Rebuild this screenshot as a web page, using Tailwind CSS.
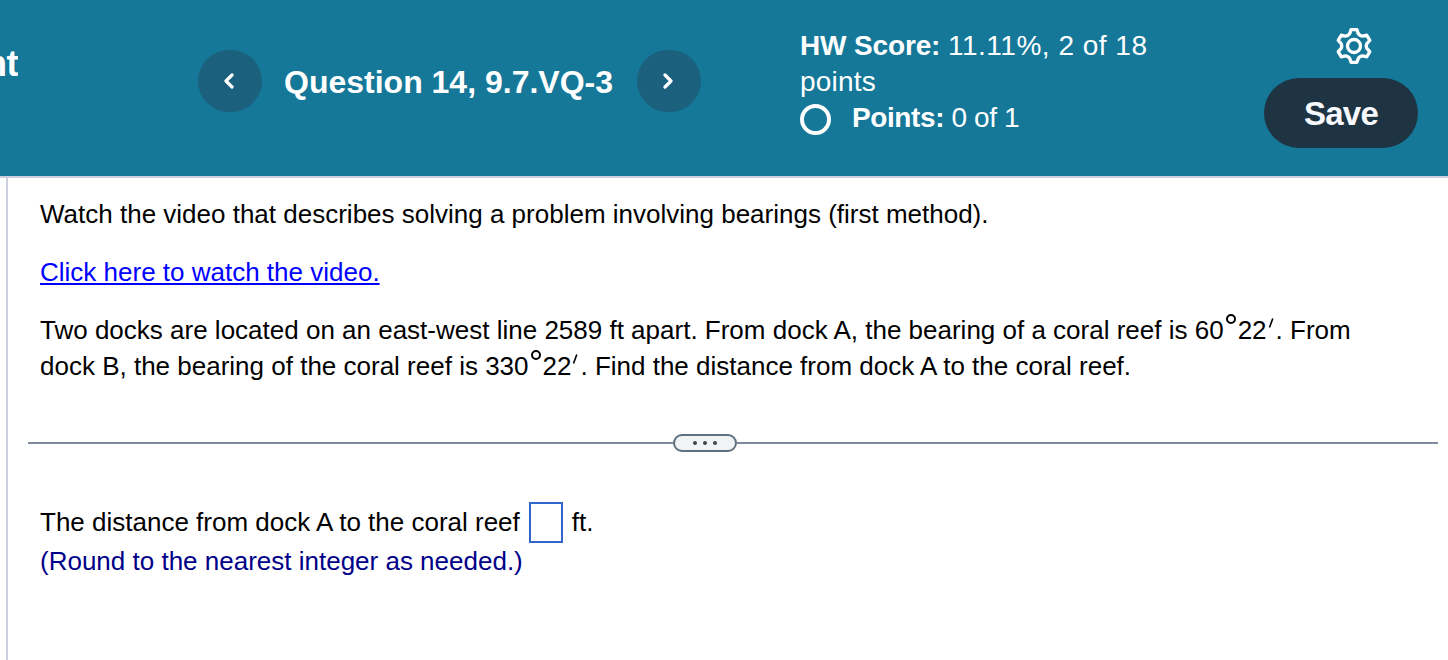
<!DOCTYPE html>
<html lang="en">
<head>
    <meta charset="UTF-8">
    <meta name="viewport" content="width=device-width, initial-scale=1.0">
    <title>Question 14, 9.7.VQ-3</title>
    <script src="https://cdn.jsdelivr.net/npm/@tailwindcss/browser@4"></script>
</head>
<body class="bg-white text-black font-['Liberation_Sans',Arial,sans-serif] h-[660px] flex flex-col overflow-hidden">
    <header class="flex items-start h-[178px] shrink-0 bg-[#157899] border-b-2 border-[#cccfde] text-white whitespace-nowrap">
        <div class="w-[198px] shrink-0 pt-[44px] overflow-hidden">
            <div class="w-[18px] flex justify-end overflow-hidden text-[36px] leading-[40px] font-bold tracking-[-0.5px]">nt</div>
        </div>

        <nav class="w-[602px] shrink-0 pt-[50px] flex items-center">
            <button class="w-[64px] h-[62px] rounded-full bg-[#1b607c] flex items-center justify-center pr-[2px]" aria-label="Previous question">
                <svg class="w-[10px] h-[16px]" viewBox="0 0 10 16" fill="none" stroke="white" stroke-width="3.2" stroke-linecap="round" stroke-linejoin="round"><path d="M8 2 2 8l6 6"/></svg>
            </button>
            <h1 class="w-[375px] pl-[22px] pt-px text-[32px] leading-[40px] font-bold">Question 14, 9.7.VQ-3</h1>
            <button class="w-[64px] h-[62px] rounded-full bg-[#1b607c] flex items-center justify-center pr-[2px]" aria-label="Next question">
                <svg class="w-[10px] h-[16px]" viewBox="0 0 10 16" fill="none" stroke="white" stroke-width="3.2" stroke-linecap="round" stroke-linejoin="round"><path d="m2 2 6 6-6 6"/></svg>
            </button>
        </nav>

        <div class="w-[464px] shrink-0 pt-[28px] text-[28px] leading-[36px]">
            <div><b class="tracking-[-0.15px]">HW Score:</b> <span class="tracking-[0.5px]">11.11%, 2 of 18</span></div>
            <div class="tracking-[0.2px]">points</div>
            <div class="flex items-center">
                <span class="w-[31px] h-[31px] mt-[3px] mr-[21px] rounded-full border-4 border-white"></span>
                <span class="tracking-[-0.4px]"><b>Points:</b> 0 of 1</span>
            </div>
        </div>

        <div class="w-[154px] shrink-0 pt-[28px] flex flex-col items-center">
            <svg class="w-[36px] h-[36px] ml-[26px]" viewBox="-18 -18 36 36" fill="none" stroke="white" stroke-width="3.3" stroke-linejoin="round">
                <path d="M-3-16.3H3L4.2-12.6Q5.75-9.96 8.8-9.94L12.8-10.8 15.8-5.6 13-2.66Q11.5 0 13 2.66L15.8 5.6 12.8 10.8 8.8 9.94Q5.75 9.96 4.2 12.6L3 16.3H-3L-4.2 12.6Q-5.75 9.96-8.8 9.94L-12.8 10.8-15.8 5.6-13 2.66Q-11.5 0-13-2.66L-15.8-5.6-12.8-10.8-8.8-9.94Q-5.75-9.96-4.2-12.6Z"/>
                <circle r="6.5"/>
            </svg>
            <button class="mt-[14px] w-[154px] h-[70px] pt-px rounded-full bg-[#1f3442] text-[#f8f8ff] text-[33px] tracking-[-0.8px] font-bold">Save</button>
        </div>
    </header>

    <main class="flex-1 ml-[6px] border-l-2 border-[#cccfde] pl-5 pr-[10px] text-[26px] leading-[36px] whitespace-nowrap">
        <section class="pl-3 pt-[18px]">
            <p class="mb-[22px]">Watch the video that describes solving a problem involving bearings (first method).</p>
            <p class="mb-[22px]"><a href="#" class="text-[#0000ff] underline decoration-2 underline-offset-[2px]">Click here to watch the video.</a></p>
            <p>Two docks are located on an east-west line 2589 ft apart. From dock A, the bearing of a coral reef is 60<svg class="inline-block align-baseline w-[14px] h-[10px] mb-[15px]" viewBox="0 0 14 10" fill="none" stroke="black" stroke-width="2"><circle cx="7" cy="5" r="4"/></svg>22<svg class="inline-block align-baseline w-[9px] h-[12px] mb-[10px]" viewBox="0 0 9 12" fill="none" stroke="black" stroke-width="1.6"><path d="m5.8 1.5-3.3 9"/></svg>. From<br>dock B, the bearing of the coral reef is 330<svg class="inline-block align-baseline w-[14px] h-[10px] mb-[15px]" viewBox="0 0 14 10" fill="none" stroke="black" stroke-width="2"><circle cx="7" cy="5" r="4"/></svg>22<svg class="inline-block align-baseline w-[9px] h-[12px] mb-[10px]" viewBox="0 0 9 12" fill="none" stroke="black" stroke-width="1.6"><path d="m5.8 1.5-3.3 9"/></svg>. Find the distance from dock A to the coral reef.</p>
        </section>

        <div class="mt-[50px] flex items-center">
            <div class="w-[645px] h-[2px] bg-[#7f8a9d]"></div>
            <div class="w-[64px] h-[18px] rounded-full border-2 border-[#5f7080] bg-[#f0f4f5] flex items-center justify-center gap-[6px]">
                <span class="size-1 rounded-full bg-[#444]"></span>
                <span class="size-1 rounded-full bg-[#444]"></span>
                <span class="size-1 rounded-full bg-[#444]"></span>
            </div>
            <div class="flex-1 h-[2px] bg-[#7f8a9d]"></div>
        </div>

        <section class="pl-3 pt-[50px]">
            <div class="flex items-center h-[41px]">
                <span class="pb-[2px]">The distance from dock A to the coral reef</span>
                <input type="text" class="w-[34px] h-[41px] ml-[9px] mr-[9px] border-2 border-[#3366cc]" aria-label="Distance">
                <span class="pb-[2px]">ft.</span>
            </div>
            <p class="text-[#000088]">(Round to the nearest integer as needed.)</p>
        </section>
    </main>
</body>
</html>
